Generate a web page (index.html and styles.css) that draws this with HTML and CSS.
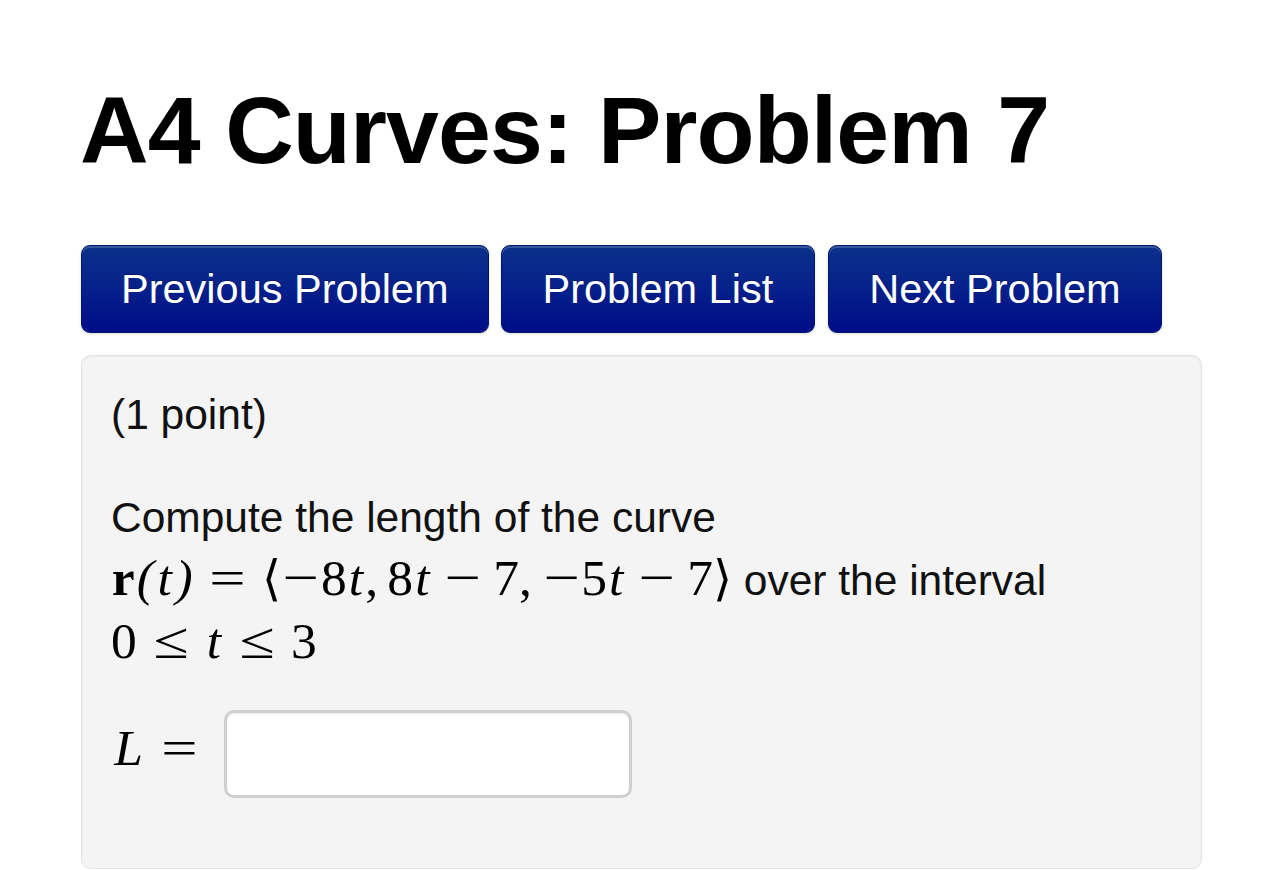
FILE: index.html
```html
<!DOCTYPE html>
<html lang="en">
<head>
<meta charset="utf-8">
<title>A4 Curves: Problem 7</title>
<link rel="stylesheet" href="styles.css">
</head>
<body>
<div class="page">
  <h1 class="title">A4 Curves: Problem 7</h1>
  <nav class="nav">
    <a class="btn btn-prev" href="#">Previous Problem</a>
    <a class="btn btn-list" href="#">Problem List</a>
    <a class="btn btn-next" href="#">Next Problem</a>
  </nav>
  <div class="well">
    <p class="points">(1 point)</p>
    <p class="prompt">Compute the length of the curve<br><span class="math"><span class="a bf">r</span><span class="a pa">(</span><span class="a it">t</span><span class="a pa">)</span><span class="a rel"><span class="g">=</span></span><span class="a br">⟨</span><span class="a op"><span class="g">−</span></span><span class="a d">8</span><span class="a it">t</span><span class="a pu">,</span><span class="a d">8</span><span class="a it">t</span><span class="a bin"><span class="g">−</span></span><span class="a d">7</span><span class="a pu">,</span><span class="a op"><span class="g">−</span></span><span class="a d">5</span><span class="a it">t</span><span class="a bin"><span class="g">−</span></span><span class="a d">7</span><span class="a br">⟩</span></span> over the interval<br><span class="math"><span class="a d">0</span><span class="a rel"><span class="g">≤</span></span><span class="a it">t</span><span class="a rel"><span class="g">≤</span></span><span class="a d">3</span></span></p>
    <p class="answer"><span class="math"><span class="a it il">L</span><span class="a rel"><span class="g">=</span></span></span> <input class="ans" type="text" aria-label="L"></p>
  </div>
</div>
</body>
</html>
```

FILE: styles.css
```css
html, body {
  margin: 0;
  padding: 0;
  background: #ffffff;
}

body {
  font-family: "Liberation Sans", Arial, Helvetica, sans-serif;
  color: #111111;
}

.page {
  width: 1121px;
  margin-left: 81px;
}

.title {
  margin: 83px 0 0 -1px;
  font-size: 95px;
  line-height: 95px;
  font-weight: bold;
  letter-spacing: -0.9px;
  color: #000000;
}

.nav {
  display: flex;
  gap: 12px;
  margin-top: 67px;
}

.btn {
  display: block;
  height: 86px;
  line-height: 86px;
  padding: 0 39px;
  font-size: 41.5px;
  color: #ffffff;
  text-decoration: none;
  text-shadow: 0 -1px 0 rgba(0, 0, 0, 0.3);
  background: linear-gradient(to bottom, #0b318b 0%, #05208a 50%, #000c89 100%);
  border: 1px solid #00166a;
  border-radius: 9px;
  box-shadow: inset 0 2px 0 rgba(255, 255, 255, 0.18), 0 1px 3px rgba(0, 0, 0, 0.15);
}

.btn-list {
  padding: 0 41px;
}

.btn-next {
  padding: 0 40px 0 40px;
  margin-left: 1px;
}

.well {
  margin-top: 22px;
  background: #f4f4f4;
  border: 1px solid #e2e2e2;
  border-radius: 10px;
  box-shadow: inset 0 1px 2px rgba(0, 0, 0, 0.05);
  padding: 29px 28px 70px 29px;
  font-size: 42.5px;
  line-height: 60px;
}

.well p {
  margin: 0;
}

.points {
  margin-bottom: 43px !important;
}

.prompt {
  margin-bottom: 36px !important;
}

.math {
  font-family: "Liberation Serif", "DejaVu Serif", "Times New Roman", serif;
  font-size: 51.5px;
  white-space: nowrap;
  color: #000000;
}

.a {
  display: inline-block;
  text-align: center;
  line-height: 1;
}

.g {
  display: inline-block;
  transform: scaleX(1.25);
}

.bf { font-weight: bold; width: 0.474em; }
.pa { font-style: italic; width: 0.389em; }
.it { font-style: italic; width: 0.361em; }
.il { width: 0.681em; }
.d { width: 0.5em; }
.rel { width: 0.778em; margin: 0 0.27em; }
.bin { width: 0.778em; margin: 0 0.21em; }
.op { width: 0.778em; }
.pu { width: 0.278em; margin-right: 0.15em; text-align: left; }
.br { width: 0.389em; font-family: "DejaVu Serif", serif; font-size: 0.95em; }

.answer {
  white-space: nowrap;
}

.ans {
  box-sizing: border-box;
  width: 408px;
  height: 88px;
  vertical-align: middle;
  margin: 0 0 0 -2px;
  background: #ffffff;
  border: 3px solid #cfcfcf;
  border-radius: 10px;
  box-shadow: inset 0 1px 2px rgba(0, 0, 0, 0.08);
  font-size: 40px;
  padding: 0 12px;
}
```
